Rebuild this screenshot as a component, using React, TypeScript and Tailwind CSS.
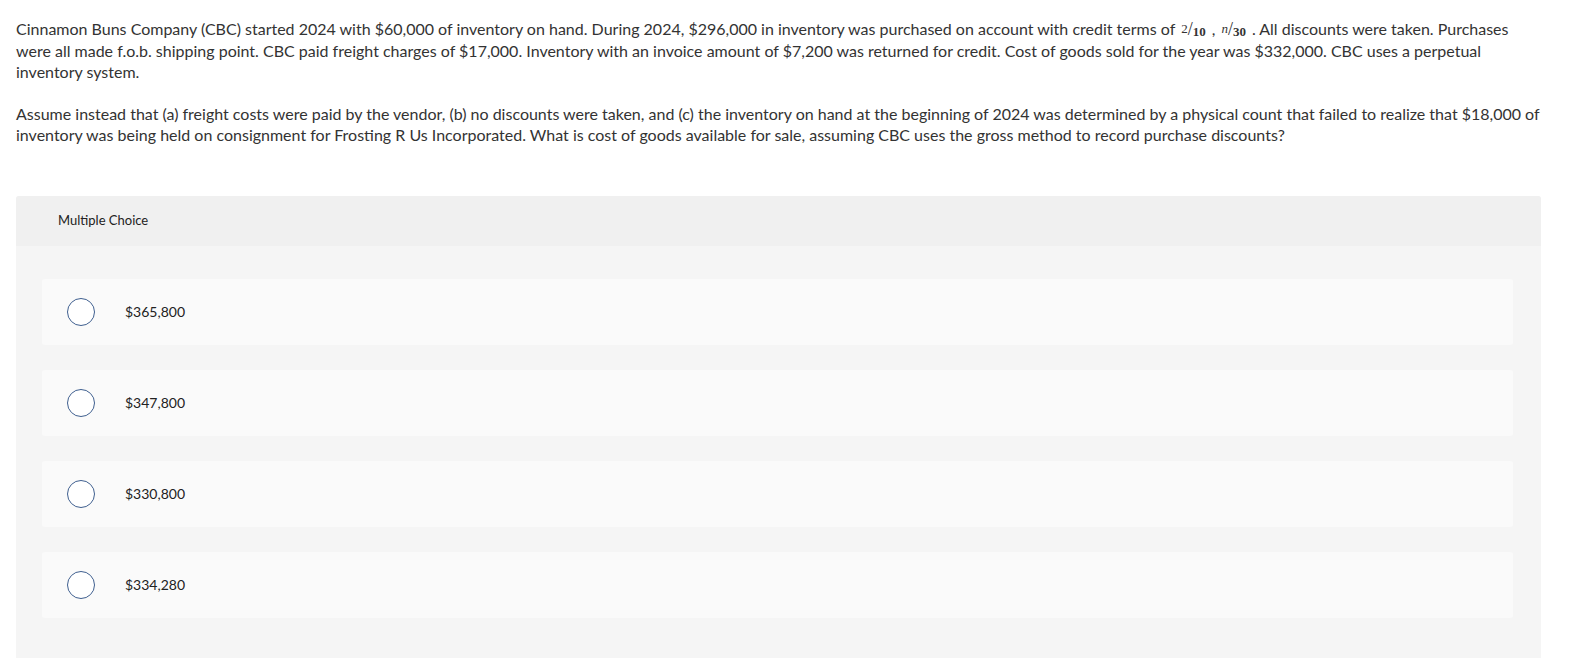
import React from "react";

const options = ["$365,800", "$347,800", "$330,800", "$334,280"];

function Frac({ num, den, italic }: { num: string; den: string; italic?: boolean }) {
  return (
    <span className="mx-[6px] inline-flex items-baseline font-['Liberation_Serif',serif] text-[15px] text-[#333]">
      <sup className={`relative -top-[2px] text-[13px] ${italic ? "italic" : ""}`}>{num}</sup>
      <span className="text-[18px] leading-none">/</span>
      <sub className="relative top-[1px] text-[13px] font-bold">{den}</sub>
    </span>
  );
}

export default function App() {
  return (
    <div className="min-h-[666px] bg-white font-['Lato',sans-serif] text-[#333]">
      <div className="ml-4 w-[1525px] pt-[18px]">
        <div className="w-[1560px]">
          <p className="text-[16px] leading-[21.5px]">
            Cinnamon Buns Company (CBC) started 2024 with $60,000 of inventory on hand. During 2024, $296,000 in
            inventory was purchased on account with credit terms of
            <Frac num="2" den="10" />,<Frac num="n" den="30" italic />. All discounts were taken. Purchases
            <br />
            were all made f.o.b. shipping point. CBC paid freight charges of $17,000. Inventory with an invoice amount
            of $7,200 was returned for credit. Cost of goods sold for the year was $332,000. CBC uses a perpetual
            <br />
            inventory system.
          </p>
          <p className="mt-[20px] text-[16px] leading-[21.5px]">
            Assume instead that (a) freight costs were paid by the vendor, (b) no discounts were taken, and (c) the
            inventory on hand at the beginning of 2024 was determined by a physical count that failed to realize that
            $18,000 of
            <br />
            inventory was being held on consignment for Frosting R Us Incorporated. What is cost of goods available
            for sale, assuming CBC uses the gross method to record purchase discounts?
          </p>
        </div>

        <div className="mt-[50px] rounded-t-[3px] bg-[#f5f5f5] pb-10">
          <div className="flex h-[50px] items-center rounded-t-[3px] bg-[#f0f0f0] pl-[42px] text-[13px] text-[#222]">
            Multiple Choice
          </div>
          <div className="flex flex-col gap-[25px] pl-[26px] pr-[28px] pt-[33px]">
            {options.map((o) => (
              <div key={o} className="flex h-[66px] items-center rounded-[3px] bg-[#fafafa] pl-[25px]">
                <span className="h-[28px] w-[28px] rounded-full border-[1.5px] border-[#3f5f8f] bg-white" />
                <span className="ml-[30px] text-[14px] text-[#222]">{o}</span>
              </div>
            ))}
          </div>
        </div>
      </div>
    </div>
  );
}
